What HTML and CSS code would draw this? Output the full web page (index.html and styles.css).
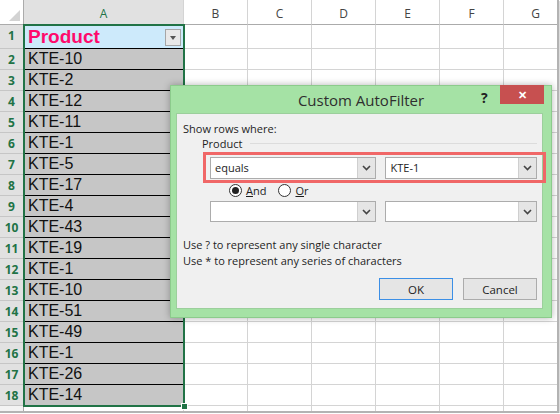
FILE: index.html
```html
<!DOCTYPE html>
<html lang="en">
<head>
  <meta charset="UTF-8">
  <title>Custom AutoFilter</title>
  <meta name="viewport" content="width=device-width, initial-scale=1.0">
  <link rel="stylesheet" href="styles.css">
</head>
<body>
  <div class="window">
    <div class="grid" id="grid"></div>
    <div class="selection"><span class="fill-handle"></span></div>

    <div class="dialog">
      <div class="dialog-title">
        <span class="title-text">Custom AutoFilter</span>
        <span class="help">?</span>
        <span class="close">&#x2715;</span>
      </div>
      <div class="panel">
        <div class="caption">Show rows where:</div>
        <div class="legend"><span>Product</span><i class="rule"></i></div>
        <div class="combo-row first">
          <div class="combo wide"><span class="value">equals</span><span class="drop"><svg width="9" height="6" viewBox="0 0 9 6"><polyline points="1,1 4.5,4.5 8,1" fill="none" stroke="#444" stroke-width="1.6"/></svg></span></div>
          <div class="combo narrow"><span class="value">KTE-1</span><span class="drop"><svg width="9" height="6" viewBox="0 0 9 6"><polyline points="1,1 4.5,4.5 8,1" fill="none" stroke="#444" stroke-width="1.6"/></svg></span></div>
        </div>
        <div class="radio-row">
          <label class="radio checked"><span class="dot"></span><span><u>A</u>nd</span></label>
          <label class="radio"><span class="dot"></span><span><u>O</u>r</span></label>
        </div>
        <div class="combo-row second">
          <div class="combo wide"><span class="value"></span><span class="drop"><svg width="9" height="6" viewBox="0 0 9 6"><polyline points="1,1 4.5,4.5 8,1" fill="none" stroke="#444" stroke-width="1.6"/></svg></span></div>
          <div class="combo narrow"><span class="value"></span><span class="drop"><svg width="9" height="6" viewBox="0 0 9 6"><polyline points="1,1 4.5,4.5 8,1" fill="none" stroke="#444" stroke-width="1.6"/></svg></span></div>
        </div>
        <p class="hint">Use ? to represent any single character</p>
        <p class="hint">Use * to represent any series of characters</p>
        <div class="buttons">
          <button class="btn default">OK</button>
          <button class="btn">Cancel</button>
        </div>
        <div class="highlight"></div>
      </div>
    </div>
  </div>
  <script>
    const products = ['KTE-10', 'KTE-2', 'KTE-12', 'KTE-11', 'KTE-1', 'KTE-5', 'KTE-17', 'KTE-4',
      'KTE-43', 'KTE-19', 'KTE-1', 'KTE-10', 'KTE-51', 'KTE-49', 'KTE-1', 'KTE-26', 'KTE-14'];
    const letters = ['A', 'B', 'C', 'D', 'E', 'F', 'G'];
    const grid = document.getElementById('grid');

    function addCell(cls, text) {
      const div = document.createElement('div');
      div.className = 'cell ' + cls;
      if (text) div.textContent = text;
      grid.appendChild(div);
      return div;
    }

    // column headers
    addCell('corner');
    letters.forEach(function (l, i) {
      addCell(i === 0 ? 'col-head active' : 'col-head', l);
    });

    // header row of the data
    addCell('row-head', '1');
    const title = addCell('data title', 'Product');
    const filter = document.createElement('span');
    filter.className = 'filter-btn';
    title.appendChild(filter);
    for (let c = 1; c < letters.length; c++) addCell('empty');

    products.forEach(function (p, i) {
      addCell('row-head', String(i + 2));
      addCell('data', p);
      for (let c = 1; c < letters.length; c++) addCell('empty');
    });

    // one more row, cut off by the window edge
    addCell('row-head plain');
    addCell('empty');
    for (let c = 1; c < letters.length; c++) addCell('empty');
  </script>
</body>
</html>
```

FILE: styles.css
```css
body {
  margin: 0;
  background: #fff;
  font-family: 'Liberation Sans', Arial, sans-serif;
}
.window {
  position: relative;
  width: 557px;
  height: 411px;
  overflow: hidden;
  background: #fff;
  border-right: 2px solid #b3b3b3;
  border-bottom: 2px solid #b3b3b3;
  box-shadow: 1px 1px 0 #dcdcdc;
}

/* sheet grid */
.grid {
  display: grid;
  grid-template-columns: 24px 160px repeat(6, 64px);
  grid-template-rows: 25px 24px;
  grid-auto-rows: 21px;
}
.cell {
  box-sizing: border-box;
  border-right: 1px solid #d4d4d4;
  border-bottom: 1px solid #d4d4d4;
  overflow: hidden;
  white-space: nowrap;
}
.corner {
  position: relative;
  background: #fff;
  border-bottom-color: #ababab;
  border-right-color: #ababab;
}
.corner::after {
  content: '';
  position: absolute;
  right: 3px;
  bottom: 3px;
  border-left: 11px solid transparent;
  border-bottom: 11px solid #d3d3d3;
}
.col-head {
  background: #fff;
  border-bottom-color: #ababab;
  color: #444;
  font-family: 'Open Sans', sans-serif;
  font-size: 12px;
  text-align: center;
  padding-top: 5px;
}
.col-head.active {
  background: #e1e1e1;
  color: #217346;
}
.row-head {
  background: #e1e1e1;
  border-right-color: #ababab;
  border-bottom-color: #c6c6c6;
  color: #217346;
  font-family: 'Open Sans', sans-serif;
  font-weight: 700;
  font-size: 12px;
  text-align: center;
  line-height: 21px;
}
.row-head.plain {
  background: #f3f3f3;
}
.data {
  background: #c6c6c6;
  border-bottom-color: #000;
  color: #111;
  font-size: 16px;
  line-height: 20px;
  padding-left: 4px;
}
.data.title {
  position: relative;
  background: #cdeafb;
  color: #ff0a6c;
  font-size: 19px;
  font-weight: 700;
  line-height: 23px;
}
.filter-btn {
  position: absolute;
  right: 2px;
  top: 4px;
  width: 14px;
  height: 15px;
  border: 1px solid #a6a6a6;
  background: #e8e8e8;
}
.filter-btn::after {
  content: '';
  position: absolute;
  left: 4px;
  top: 6px;
  border-left: 3px solid transparent;
  border-right: 3px solid transparent;
  border-top: 4px solid #555;
}
.selection {
  position: absolute;
  left: 23px;
  top: 24px;
  width: 162px;
  height: 383px;
  box-sizing: border-box;
  border: 2px solid #217346;
}
.fill-handle {
  position: absolute;
  right: -5px;
  bottom: -5px;
  width: 5px;
  height: 5px;
  background: #217346;
  border: 1px solid #fff;
}

/* dialog */
.dialog {
  position: absolute;
  left: 170px;
  top: 85px;
  width: 382px;
  height: 233px;
  box-sizing: border-box;
  background: #a5e2a5;
  border: 1px solid #8ccb8c;
  box-shadow: 0 0 7px rgba(0,0,0,0.3);
  font-family: 'Open Sans', sans-serif;
  font-size: 11px;
  color: #1e1e1e;
}
.dialog-title {
  position: relative;
  height: 27px;
  text-align: center;
}
.title-text {
  display: inline-block;
  font-size: 15px;
  color: #2f2f2f;
  line-height: 28px;
}
.help {
  position: absolute;
  left: 310px;
  top: 2px;
  font-weight: 700;
  font-size: 14px;
  color: #222;
}
.close {
  position: absolute;
  right: 7px;
  top: -1px;
  width: 44px;
  height: 19px;
  background: #c75050;
  color: #fff;
  font-size: 11px;
  font-weight: 700;
  line-height: 19px;
  text-align: center;
}
.panel {
  position: relative;
  margin: 0 8px 0 5px;
  height: 196px;
  box-sizing: border-box;
  background: #f0f0f0;
  border: 1px solid #9ccf9c;
  padding: 7px 5px 0 6px;
}
.caption {
  line-height: 15px;
}
.legend {
  display: flex;
  align-items: center;
  line-height: 15px;
  padding-left: 19px;
}
.legend .rule {
  flex: 1;
  margin-left: 8px;
  border-top: 1px solid #dcdcdc;
}
.combo-row {
  display: flex;
  gap: 9px;
  padding-left: 27px;
}
.combo-row.first {
  margin-top: 6px;
}
.combo-row.first .combo {
  height: 22px;
}
.combo-row.second .combo {
  height: 21px;
}
.combo {
  display: flex;
  box-sizing: border-box;
  background: #fff;
  border: 1px solid #acacac;
}
.combo.wide {
  width: 167px;
}
.combo.narrow {
  width: 152px;
}
.combo .value {
  flex: 1;
  padding-left: 4px;
  line-height: 20px;
}
.combo .drop {
  width: 17px;
  display: flex;
  align-items: center;
  justify-content: center;
  background: #e5e5e5;
  border-left: 1px solid #cfcfcf;
}
.radio-row {
  display: flex;
  align-items: center;
  height: 22px;
  padding-left: 46px;
}
.radio {
  display: flex;
  align-items: center;
  gap: 4px;
  margin-right: 12px;
}
.radio .dot {
  position: relative;
  width: 11px;
  height: 11px;
  border: 1px solid #333;
  border-radius: 50%;
  background: #fff;
}
.radio.checked .dot::after {
  content: '';
  position: absolute;
  left: 2px;
  top: 2px;
  width: 7px;
  height: 7px;
  border-radius: 50%;
  background: #222;
}
.hint {
  margin: 0;
  line-height: 16px;
}
.combo-row.second + .hint {
  margin-top: 15px;
}
.buttons {
  display: flex;
  justify-content: flex-end;
  gap: 10px;
  margin-top: 9px;
}
.btn {
  width: 74px;
  height: 22px;
  box-sizing: border-box;
  background: #e5e5e5;
  border: 1px solid #acacac;
  font-family: 'Open Sans', sans-serif;
  font-size: 11.5px;
  color: #1e1e1e;
  padding: 0;
}
.btn.default {
  border-color: #3c8fe6;
}
.highlight {
  position: absolute;
  left: 26px;
  top: 38px;
  width: 343px;
  height: 31px;
  box-sizing: border-box;
  border: 3px solid #f06767;
}
```
